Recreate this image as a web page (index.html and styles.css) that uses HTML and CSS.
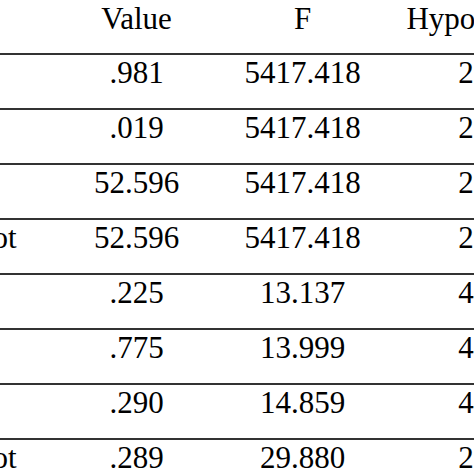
FILE: index.html
```html
<!DOCTYPE html>
<html lang="en">
<head>
<meta charset="utf-8">
<title>Multivariate Tests</title>
<link rel="stylesheet" href="styles.css">
</head>
<body>
<div class="sheet">
  <div class="table">
    <div class="row head">
      <div class="cell label"></div>
      <div class="cell">Value</div>
      <div class="cell">F</div>
      <div class="cell">Hypothesis df</div>
    </div>
    <div class="row">
      <div class="cell label">Pillai's Trace</div>
      <div class="cell">.981</div>
      <div class="cell">5417.418</div>
      <div class="cell">2.000</div>
    </div>
    <div class="row">
      <div class="cell label">Wilks' Lambda</div>
      <div class="cell">.019</div>
      <div class="cell">5417.418</div>
      <div class="cell">2.000</div>
    </div>
    <div class="row">
      <div class="cell label">Hotelling's Trace</div>
      <div class="cell">52.596</div>
      <div class="cell">5417.418</div>
      <div class="cell">2.000</div>
    </div>
    <div class="row">
      <div class="cell label">Roy's Largest Root</div>
      <div class="cell">52.596</div>
      <div class="cell">5417.418</div>
      <div class="cell">2.000</div>
    </div>
    <div class="row">
      <div class="cell label">Pillai's Trace</div>
      <div class="cell">.225</div>
      <div class="cell">13.137</div>
      <div class="cell">4.000</div>
    </div>
    <div class="row">
      <div class="cell label">Wilks' Lambda</div>
      <div class="cell">.775</div>
      <div class="cell">13.999</div>
      <div class="cell">4.000</div>
    </div>
    <div class="row">
      <div class="cell label">Hotelling's Trace</div>
      <div class="cell">.290</div>
      <div class="cell">14.859</div>
      <div class="cell">4.000</div>
    </div>
    <div class="row">
      <div class="cell label">Roy's Largest Root</div>
      <div class="cell">.289</div>
      <div class="cell">29.880</div>
      <div class="cell">2.000</div>
    </div>
  </div>
</div>
</body>
</html>
```

FILE: styles.css
```css
html, body {
  margin: 0;
  padding: 0;
  background: #ffffff;
}

.sheet {
  width: 474px;
  height: 474px;
  overflow: hidden;
  font-family: "Liberation Serif", "Times New Roman", serif;
  font-size: 31px;
  color: #000000;
}

.table {
  margin-left: -223px;
  width: 800px;
}

.row {
  display: grid;
  grid-template-columns: 293px 133px 199px 182px;
  box-sizing: border-box;
  height: 55px;
  border-top: 2px solid #333333;
  padding-top: 1px;
  line-height: 34px;
}

.row.head {
  height: 53px;
  border-top: none;
  padding-top: 2px;
}

.cell {
  text-align: center;
  white-space: nowrap;
}

.cell.label {
  text-align: left;
  padding-left: 2px;
}
```
